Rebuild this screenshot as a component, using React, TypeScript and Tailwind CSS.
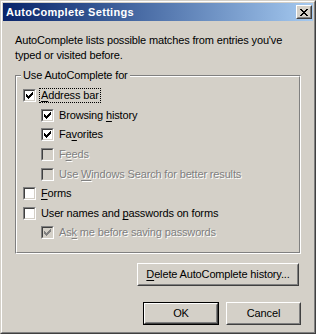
import React from "react";

const face = "bg-[#d4d0c8]";

function Check({ disabled }: { disabled?: boolean }) {
  const c = disabled ? "#808080" : "#000000";
  const px: [number, number][] = [
    [6, 0],
    [5, 1], [6, 1],
    [0, 2], [4, 2], [5, 2], [6, 2],
    [0, 3], [1, 3], [3, 3], [4, 3], [5, 3],
    [0, 4], [1, 4], [2, 4], [3, 4], [4, 4],
    [1, 5], [2, 5], [3, 5],
    [2, 6],
  ];
  return (
    <svg width="7" height="7" viewBox="0 0 7 7" shapeRendering="crispEdges">
      {px.map(([x, y], i) => (
        <rect key={i} x={x} y={y} width="1" height="1" fill={c} />
      ))}
    </svg>
  );
}

function Box({ checked, disabled }: { checked?: boolean; disabled?: boolean }) {
  return (
    <div className="w-[13px] h-[13px] shrink-0 border border-t-[#808080] border-l-[#808080] border-r-white border-b-white">
      <div
        className={`w-full h-full border border-t-[#404040] border-l-[#404040] border-r-[#d4d0c8] border-b-[#d4d0c8] flex items-center justify-center ${
          disabled ? "bg-[#d4d0c8]" : "bg-white"
        }`}
      >
        {checked && <Check disabled={disabled} />}
      </div>
    </div>
  );
}

function Row({
  indent,
  checked,
  disabled,
  focus,
  children,
}: {
  indent?: boolean;
  checked?: boolean;
  disabled?: boolean;
  focus?: boolean;
  children: React.ReactNode;
}) {
  return (
    <div className={`h-[19.6px] flex items-center ${indent ? "pl-[24px]" : "pl-[6px]"}`}>
      <Box checked={checked} disabled={disabled} />
      <span
        className={`ml-[4px] px-[1px] leading-[13px] ${
          focus ? "outline outline-1 outline-dotted outline-black" : ""
        } ${disabled ? "text-[#808080] [text-shadow:1px_1px_0_#ffffff]" : "text-black"}`}
      >
        {children}
      </span>
    </div>
  );
}

function Btn({
  children,
  def,
  className = "",
}: {
  children: React.ReactNode;
  def?: boolean;
  className?: string;
}) {
  const inner = (
    <div className="h-full border border-t-white border-l-white border-r-[#404040] border-b-[#404040]">
      <div className="h-full border border-t-[#d4d0c8] border-l-[#d4d0c8] border-r-[#808080] border-b-[#808080] flex items-center justify-center text-black">
        {children}
      </div>
    </div>
  );
  return (
    <div className={`h-[23px] ${className}`}>
      {def ? <div className="h-full border border-black">{inner}</div> : inner}
    </div>
  );
}

export default function App() {
  return (
    <div
      className={`w-[316px] h-[334px] ${face} border border-t-[#d4d0c8] border-l-[#d4d0c8] border-r-[#404040] border-b-[#404040] text-[11px] tracking-[-0.15px]`}
      style={{ fontFamily: '"Liberation Sans", Arial, sans-serif' }}
    >
      <div className="h-full border border-t-white border-l-white border-r-[#808080] border-b-[#808080] p-[1px] flex flex-col">
        {/* Title bar */}
        <div className="h-[18px] shrink-0 bg-gradient-to-r from-[#0a246a] to-[#a6caf0] flex items-center pl-[3px] pr-[1px]">
          <span className="text-white font-bold text-[11px] tracking-[0.3px] flex-1">AutoComplete Settings</span>
          <div className="w-[16px] h-[14px] border border-t-white border-l-white border-r-[#404040] border-b-[#404040]">
            <div className="w-full h-full bg-[#d4d0c8] border border-t-[#d4d0c8] border-l-[#d4d0c8] border-r-[#808080] border-b-[#808080] flex items-center justify-center">
              <svg width="8" height="7" viewBox="0 0 8 7" shapeRendering="crispEdges">
                {[0, 1, 2, 3, 4, 5, 6].map((i) => (
                  <g key={i}>
                    <rect x={i} y={i} width="2" height="1" fill="#000" />
                    <rect x={6 - i} y={i} width="2" height="1" fill="#000" />
                  </g>
                ))}
              </svg>
            </div>
          </div>
        </div>

        {/* Body */}
        <div className="flex-1 flex flex-col pl-[12px] pr-[12px]">
          <p className="mt-[12px] leading-[15px] text-black">
            AutoComplete lists possible matches from entries you've
            <br />
            typed or visited before.
          </p>

          <div className="relative mt-[12px] h-[179px] border border-t-[#808080] border-l-[#808080] border-r-white border-b-white">
            <span className="absolute left-[5px] -top-[8px] px-[2px] bg-[#d4d0c8] leading-[14px] text-black">
              Use AutoComplete for
            </span>
            <div className="h-full border border-t-white border-l-white border-r-[#808080] border-b-[#808080] pt-[9px] flex flex-col">
              <Row checked focus>
                <u className="underline-offset-[2px]">A</u>ddress bar
              </Row>
              <Row indent checked>
                Browsing <u className="underline-offset-[2px]">h</u>istory
              </Row>
              <Row indent checked>
                Fa<u className="underline-offset-[2px]">v</u>orites
              </Row>
              <Row indent disabled>
                F<u className="underline-offset-[2px]">e</u>eds
              </Row>
              <Row indent disabled>
                Use <u className="underline-offset-[2px]">W</u>indows Search for better results
              </Row>
              <Row>
                <u className="underline-offset-[2px]">F</u>orms
              </Row>
              <Row>
                User names and <u className="underline-offset-[2px]">p</u>asswords on forms
              </Row>
              <Row indent checked disabled>
                As<u className="underline-offset-[2px]">k</u> me before saving passwords
              </Row>
            </div>
          </div>

          <div className="flex justify-end mt-[9px] pr-[2px]">
            <Btn className="w-[162px]">
              <span>
                <u className="underline-offset-[2px]">D</u>elete AutoComplete history...
              </span>
            </Btn>
          </div>

          <div className="flex justify-end gap-[7px] mt-[16px]">
            <Btn def className="w-[76px]">OK</Btn>
            <Btn className="w-[75px]">Cancel</Btn>
          </div>
        </div>
      </div>
    </div>
  );
}
